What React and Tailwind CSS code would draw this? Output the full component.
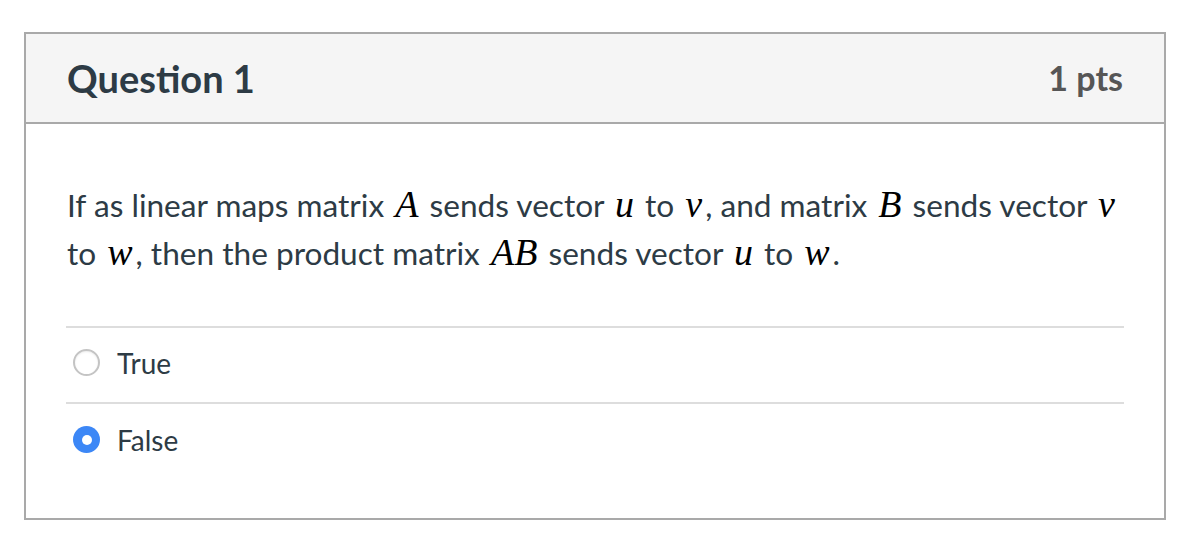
import React from 'react';

const M = ({ children }) => (
    <span className="text-[38px] italic text-black mx-[3px]" style={{ fontFamily: '"Liberation Serif", serif' }}>{children}</span>
);

const Option = ({ label, checked, last }) => (
    <div className={`flex items-center h-[76px] pb-[5px] ${last ? '' : 'border-b-2 border-[#dddddd]'}`}>
        {checked ? (
            <span className="ml-[7px] w-[27px] h-[27px] rounded-full bg-[#3c87f6] flex items-center justify-center">
                <span className="w-[10px] h-[10px] rounded-full bg-white" />
            </span>
        ) : (
            <span className="ml-[7px] w-[27px] h-[27px] rounded-full border-2 border-[#c4c4c4] bg-white shadow-[inset_0_1px_2px_rgba(0,0,0,0.08)]" />
        )}
        <span className="ml-[17px] text-[28px] text-[#2d3b45]">{label}</span>
    </div>
);

export default function App() {
    return (
        <div className="w-[1198px] h-[540px] bg-white pt-[32px] pl-[24px]" style={{ fontFamily: 'Lato, "Open Sans", sans-serif' }}>
            <div className="w-[1142px] h-[488px] border-2 border-[#a9a9a9] flex flex-col">
                {/* Header */}
                <div className="h-[90px] bg-[#f5f5f5] border-b-2 border-[#a9a9a9] flex items-center justify-between px-[41px] shrink-0">
                    <h2 className="text-[38px] font-bold text-[#2d3b45] leading-none">Question 1</h2>
                    <span className="text-[34px] font-bold text-[#565656] leading-none">1 pts</span>
                </div>

                {/* Body */}
                <div className="px-[40px] pt-[57px]">
                    <p className="text-[31.6px] leading-[47px] text-[#2d3b45] pl-[1px]">
                        If as linear maps matrix <M>A</M> sends vector <M>u</M> to <M>v</M>, and matrix <M>B</M> sends vector <M>v</M> to <M>w</M>, then the product matrix <M>AB</M> sends vector <M>u</M> to <M>w</M>.
                    </p>
                    <div className="mt-[49px] border-t-2 border-[#dddddd]">
                        <Option label="True" />
                        <Option label="False" checked last />
                    </div>
                </div>
            </div>
        </div>
    );
}
